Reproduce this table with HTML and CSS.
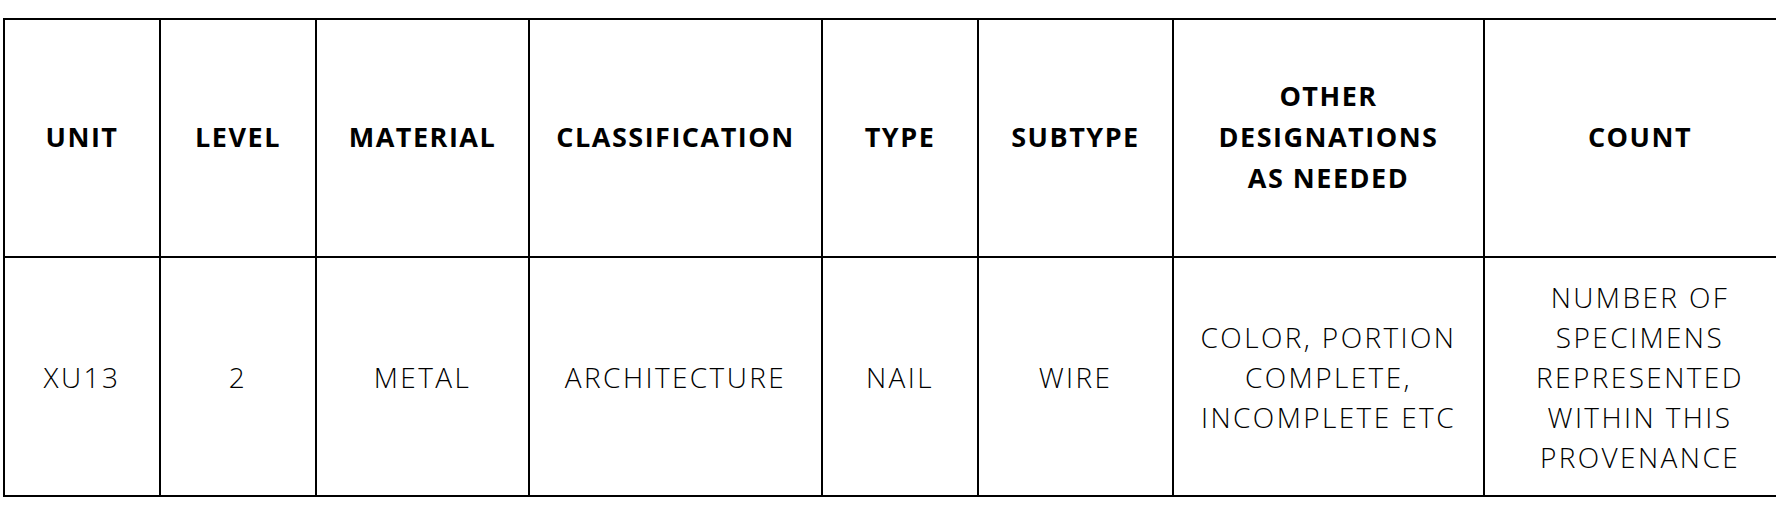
FILE: index.html
```html
<!DOCTYPE html>
<html lang="en">
<head>
<meta charset="utf-8">
<title>Artifact catalog fields</title>
<link rel="stylesheet" href="styles.css">
</head>
<body>
<div class="sheet">
  <div class="cell head">UNIT</div>
  <div class="cell head">LEVEL</div>
  <div class="cell head">MATERIAL</div>
  <div class="cell head">CLASSIFICATION</div>
  <div class="cell head">TYPE</div>
  <div class="cell head">SUBTYPE</div>
  <div class="cell head">OTHER<br>DESIGNATIONS<br>AS NEEDED</div>
  <div class="cell head">COUNT</div>
  <div class="cell body">XU13</div>
  <div class="cell body">2</div>
  <div class="cell body">METAL</div>
  <div class="cell body">ARCHITECTURE</div>
  <div class="cell body">NAIL</div>
  <div class="cell body">WIRE</div>
  <div class="cell body">COLOR, PORTION<br>COMPLETE,<br>INCOMPLETE ETC</div>
  <div class="cell body">NUMBER OF<br>SPECIMENS<br>REPRESENTED<br>WITHIN THIS<br>PROVENANCE</div>
</div>
</body>
</html>
```
FILE: styles.css
```css
html, body {
  margin: 0;
  padding: 0;
  background: #ffffff;
  overflow: hidden;
}

body {
  padding: 18px 0 0 3px;
}

.sheet {
  display: grid;
  grid-template-columns: 156px 156px 213px 293px 156px 195px 311px 312px;
  grid-template-rows: 238px 239px;
  width: max-content;
  border-left: 2px solid #000;
  border-top: 2px solid #000;
}

.cell {
  box-sizing: border-box;
  border-right: 2px solid #000;
  border-bottom: 2px solid #000;
  display: flex;
  align-items: center;
  justify-content: center;
  text-align: center;
  color: #000;
  font-family: "Open Sans", "Noto Sans", "DejaVu Sans", sans-serif;
}

.head {
  font-size: 27px;
  font-weight: 700;
  letter-spacing: 1.5px;
  line-height: 41px;
  padding-bottom: 4px;
}

.body {
  font-size: 28px;
  font-weight: 350;
  letter-spacing: 2.4px;
  line-height: 40px;
  color: #000;
}
```
